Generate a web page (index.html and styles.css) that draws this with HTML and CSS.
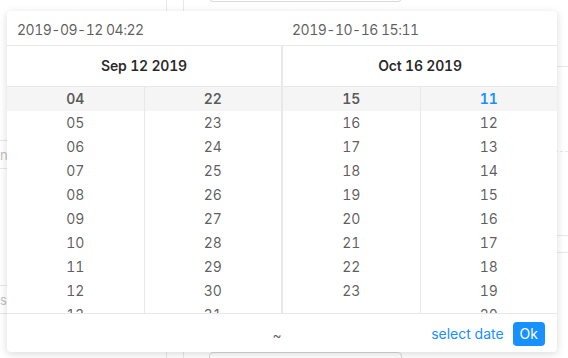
FILE: index.html
```html
<!DOCTYPE html>
<html lang="en">
<head>
    <meta charset="UTF-8">
    <meta name="viewport" content="width=device-width, initial-scale=1.0">
    <title>Range time picker</title>
    <link rel="stylesheet" href="styles.css">
</head>
<body>
    <div class="page">
        <div class="side">
            <div class="side-row">name</div>
            <div class="side-row tall"></div>
            <div class="side-row">size</div>
        </div>
        <div class="gutter"></div>
        <div class="main">
            <div class="field top"></div>
            <div class="rule r1"></div>
            <div class="rule r2 dashed"></div>
            <div class="rule r3"></div>
            <div class="rule r4"></div>
            <div class="field bottom"></div>
        </div>
    </div>

    <div class="picker">
        <div class="inputs">
            <div class="input">2019-09-12 04:22</div>
            <div class="input">2019-10-16 15:11</div>
        </div>
        <div class="panels">
            <div class="panel">
                <div class="title">Sep 12 2019</div>
                <div class="columns">
                    <ul class="col">
                        <li class="selected">04</li>
                        <li>05</li><li>06</li><li>07</li><li>08</li><li>09</li>
                        <li>10</li><li>11</li><li>12</li><li>13</li>
                    </ul>
                    <ul class="col">
                        <li class="selected">22</li>
                        <li>23</li><li>24</li><li>25</li><li>26</li><li>27</li>
                        <li>28</li><li>29</li><li>30</li><li>31</li>
                    </ul>
                </div>
            </div>
            <div class="panel">
                <div class="title">Oct 16 2019</div>
                <div class="columns">
                    <ul class="col">
                        <li class="selected">15</li>
                        <li>16</li><li>17</li><li>18</li><li>19</li><li>20</li>
                        <li>21</li><li>22</li><li>23</li>
                    </ul>
                    <ul class="col">
                        <li class="selected active">11</li>
                        <li>12</li><li>13</li><li>14</li><li>15</li><li>16</li>
                        <li>17</li><li>18</li><li>19</li><li>20</li>
                    </ul>
                </div>
            </div>
        </div>
        <div class="footer">
            <span class="sep">~</span>
            <div class="actions">
                <a class="link" href="#">select date</a>
                <button class="ok">Ok</button>
            </div>
        </div>
    </div>
</body>
</html>
```

FILE: styles.css
```css
* {
    box-sizing: border-box;
}
html, body {
    height: 358px;
    overflow: hidden;
}
body {
    margin: 0;
    font-family: Inter, "Liberation Sans", sans-serif;
    font-size: 14px;
    font-variant-numeric: tabular-nums;
    color: rgba(0, 0, 0, 0.65);
    background: #fff;
}
.page {
    display: flex;
    height: 358px;
    overflow: hidden;
    position: relative;
}
.side {
    width: 167px;
    border-right: 1px solid #e8e8e8;
    padding-top: 140px;
}
.side-row {
    height: 29px;
    line-height: 29px;
    border-top: 1px solid #e8e8e8;
    border-bottom: 1px solid #e8e8e8;
    color: #bfbfbf;
    font-size: 13px;
}
.side-row.tall {
    height: 116px;
    border: none;
}
.gutter {
    width: 17px;
    border-right: 1px solid #e8e8e8;
}
.main {
    flex: 1;
    display: flex;
    flex-direction: column;
    padding-left: 25px;
}
.field {
    width: 193px;
    height: 32px;
    flex-shrink: 0;
    border: 1px solid #d9d9d9;
    border-radius: 4px;
}
.field.top {
    margin-top: -30px;
}
.field.bottom {
    margin-top: auto;
    margin-bottom: -26px;
}
.rule {
    height: 1px;
    background: #e8e8e8;
    margin-left: -25px;
}
.r1 { margin-top: 64px; }
.r2 { margin-top: 84px; background: none; border-top: 1px dashed #e8e8e8; }
.r3 { margin-top: 83px; }
.r4 { margin-top: 16px; }

.picker {
    position: absolute;
    left: 7px;
    top: 11px;
    width: 550px;
    height: 341px;
    background: #fff;
    border-radius: 4px;
    box-shadow: 0 2px 8px rgba(0, 0, 0, 0.15);
    display: flex;
    flex-direction: column;
    overflow: hidden;
}
.inputs {
    display: flex;
    height: 35px;
    border-bottom: 1px solid #e8e8e8;
}
.input {
    flex: 1;
    padding: 9px 10px 0;
    line-height: 20px;
    letter-spacing: -0.5px;
    color: rgba(0, 0, 0, 0.65);
}
.panels {
    display: flex;
    flex: 1;
}
.panel {
    flex: 1;
    display: flex;
    flex-direction: column;
}
.panel:first-child {
    border-right: 1px solid #e8e8e8;
}
.panel + .panel {
    border-left: 1px solid #e8e8e8;
}
.title {
    height: 41px;
    line-height: 40px;
    text-align: center;
    font-weight: 600;
    letter-spacing: -0.2px;
    color: rgba(0, 0, 0, 0.85);
    border-bottom: 1px solid #e8e8e8;
}
.columns {
    display: flex;
    height: 226px;
    overflow: hidden;
}
.col {
    flex: 1;
    list-style: none;
    margin: 0;
    padding: 0;
}
.col + .col {
    border-left: 1px solid #e8e8e8;
}
.col li {
    height: 24px;
    line-height: 24px;
    text-align: center;
}
.col li.selected {
    background: #f5f5f5;
    font-weight: 600;
}
.col li.active {
    color: #1890ff;
}
.footer {
    height: 39px;
    border-top: 1px solid #e8e8e8;
    display: grid;
    grid-template-columns: 1fr auto 1fr;
    align-items: center;
    padding: 0 12px;
}
.sep {
    grid-column: 2;
    margin-right: 10px;
    padding-top: 3px;
}
.actions {
    grid-column: 3;
    justify-self: end;
    display: flex;
    align-items: center;
    gap: 9px;
    padding-top: 1px;
}
.link {
    color: #1890ff;
    text-decoration: none;
}
.ok {
    height: 24px;
    padding: 0 7px;
    border: none;
    border-radius: 4px;
    background: #1890ff;
    color: #fff;
    font-family: inherit;
    font-size: 14px;
}
```
